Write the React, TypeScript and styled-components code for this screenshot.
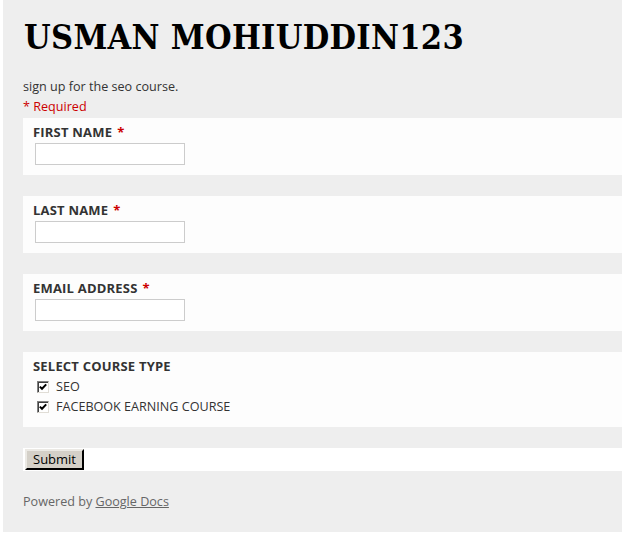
import React from 'react';
import styled, { createGlobalStyle } from 'styled-components';

const GlobalStyle = createGlobalStyle`
  html, body {
    margin: 0;
    padding: 0;
    background: #ffffff;
  }
  body {
    font-family: "Open Sans", "DejaVu Sans", sans-serif;
    overflow: hidden;
  }
`;

interface Field {
  label: string;
  required?: boolean;
}

const textFields: Field[] = [
  { label: 'First Name', required: true },
  { label: 'Last Name', required: true },
  { label: 'Email Address', required: true },
];

const courses = ['SEO', 'FACEBOOK EARNING COURSE'];

const CheckMark = () => (
  <svg width="8" height="8" viewBox="0 0 8 8">
    <path d="M0.8 3.6 L3 5.8 L7.2 1.4" stroke="#000" strokeWidth="2" fill="none" />
  </svg>
);

const App: React.FC = () => {
  return (
    <>
      <GlobalStyle />
      <Page>
        <Title>USMAN MOHIUDDIN123</Title>
        <Description>sign up for the seo course.</Description>
        <RequiredNote>* Required</RequiredNote>
        <Form onSubmit={e => e.preventDefault()}>
          {textFields.map(f => (
            <FieldBox key={f.label}>
              <Label>
                {f.label}
                {f.required && <Star>*</Star>}
              </Label>
              <TextInput type="text" />
            </FieldBox>
          ))}
          <FieldBox>
            <Label>Select Course Type</Label>
            {courses.map(c => (
              <CheckRow key={c}>
                <CheckBox>
                  <CheckMark />
                </CheckBox>
                <span>{c}</span>
              </CheckRow>
            ))}
          </FieldBox>
          <SubmitRow>
            <SubmitButton type="submit">Submit</SubmitButton>
          </SubmitRow>
        </Form>
        <Footer>
          Powered by <FooterLink href="#">Google Docs</FooterLink>
        </Footer>
      </Page>
    </>
  );
};

// Styled Components
const Page = styled.div`
  margin-left: 3px;
  background: #eeeeee;
  height: 532px;
  padding: 17px 0 0 20px;
  box-sizing: border-box;
`;

const Title = styled.h1`
  font-family: "DejaVu Serif", Georgia, serif;
  font-stretch: condensed;
  font-weight: bold;
  font-size: 34px;
  line-height: 40px;
  margin: 0 0 20px 1px;
  color: #000;
  letter-spacing: 0.3px;
`;

const Description = styled.div`
  font-size: 12.6px;
  line-height: 20px;
  color: #333;
`;

const RequiredNote = styled.div`
  font-size: 12.6px;
  line-height: 20px;
  color: #cc0000;
`;

const Form = styled.form`
  display: flex;
  flex-direction: column;
  gap: 21px;
  margin-top: 1px;
`;

const FieldBox = styled.div`
  background: #fdfdfd;
  padding: 6px 10px 10px;
  display: flex;
  flex-direction: column;
`;

const Label = styled.div`
  font-size: 13px;
  font-weight: bold;
  text-transform: uppercase;
  color: #333;
  line-height: 17px;
  margin-bottom: 2px;
  letter-spacing: 0.2px;
`;

const Star = styled.span`
  color: #cc0000;
  margin-left: 5px;
`;

const TextInput = styled.input`
  width: 150px;
  height: 22px;
  box-sizing: border-box;
  border: 1px solid #cccccc;
  background: #fff;
  margin: 0 0 0 2px;
  padding: 2px 4px;
`;

const CheckRow = styled.label`
  display: flex;
  align-items: center;
  font-size: 12.6px;
  color: #333;
  line-height: 20px;
  gap: 7px;
  padding-left: 4px;
`;

const CheckBox = styled.span`
  width: 12px;
  height: 12px;
  box-sizing: border-box;
  border: 1px solid #808080;
  border-right-color: #e0ddd6;
  border-bottom-color: #e0ddd6;
  background: #fff;
  display: flex;
  align-items: center;
  justify-content: center;
  box-shadow: inset 1px 1px 0 #404040;
`;

const SubmitRow = styled.div`
  background: #ffffff;
  padding: 1px 2px;
  display: flex;
`;

const SubmitButton = styled.button`
  font-family: "Open Sans", "DejaVu Sans", sans-serif;
  font-size: 13px;
  height: 21px;
  padding: 0 6px;
  background: #d4d0c8;
  color: #000;
  border: 2px outset #ebe9e4;
  border-right-color: #404040;
  border-bottom-color: #404040;
  line-height: 15px;
`;

const Footer = styled.div`
  margin-top: 22px;
  font-size: 12.6px;
  color: #666;
`;

const FooterLink = styled.a`
  color: #666;
  text-decoration: underline;
`;

export default App;
